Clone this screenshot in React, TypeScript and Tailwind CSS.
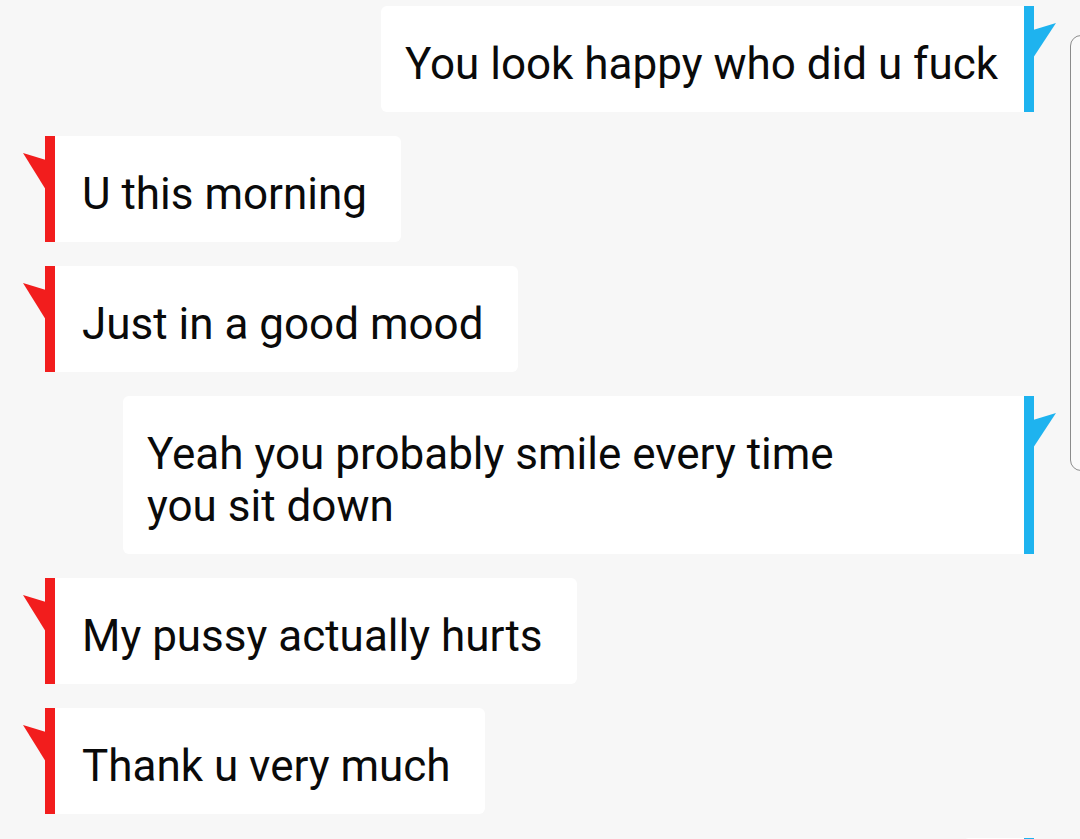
type Msg = { out: boolean; lines: string[]; width?: string };

const messages: Msg[] = [
  { out: true, lines: ['You look happy who did u fuck'] },
  { out: false, lines: ['U this morning'] },
  { out: false, lines: ['Just in a good mood'] },
  { out: true, lines: ['Yeah you probably smile every time', 'you sit down'], width: 'w-[901px]' },
  { out: false, lines: ['My pussy actually hurts'] },
  { out: false, lines: ['Thank u very much'] },
  { out: true, lines: [''] },
];

const Lines = ({ lines }: { lines: string[] }) => (
  <>
    {lines.map((l, i) => (
      <div key={i}>{l || '\u00a0'}</div>
    ))}
  </>
);

const Bubble = ({ msg }: { msg: Msg }) => {
  if (msg.out) {
    return (
      <div className="flex justify-end pr-[46px]">
        <div className="relative flex">
          <div
            className={`rounded-l-[6px] bg-white pl-[24px] pr-[26px] pt-[32px] pb-[22px] text-[44px] leading-[52px] text-[#0a0a0a] ${msg.width ?? ''}`}
          >
            <Lines lines={msg.lines} />
          </div>
          <div className="w-[10px] bg-[#1eb3ef]" />
          <svg className="absolute right-[-23px] top-[17px]" width="24" height="36" viewBox="0 0 24 36">
            <polygon points="0,7 23,0 0,35" fill="#1eb3ef" />
          </svg>
        </div>
      </div>
    );
  }

  return (
    <div className="flex justify-start pl-[45px]">
      <div className="relative flex">
        <svg className="absolute left-[-22px] top-[17px]" width="24" height="38" viewBox="0 0 24 38">
          <polygon points="0,0 23,7 23,37" fill="#f21d1d" />
        </svg>
        <div className="w-[10px] bg-[#f21d1d]" />
        <div className="rounded-r-[6px] bg-white pl-[27px] pr-[34px] pt-[32px] pb-[22px] text-[44px] leading-[52px] text-[#0a0a0a]">
          <Lines lines={msg.lines} />
        </div>
      </div>
    </div>
  );
};

export default function App() {
  return (
    <div
      className="relative h-[839px] w-[1080px] overflow-hidden bg-[#f7f7f7] pt-[6px]"
      style={{ fontFamily: 'Roboto, "Noto Sans", sans-serif' }}
    >
      <div className="flex flex-col gap-[24px]">
        {messages.map((m, i) => (
          <Bubble key={i} msg={m} />
        ))}
      </div>
      <div className="absolute left-[1070px] top-[35px] h-[436px] w-[40px] rounded-[11px] border-[1.5px] border-[#8c8c8c] bg-[#fafafa]" />
    </div>
  );
}
